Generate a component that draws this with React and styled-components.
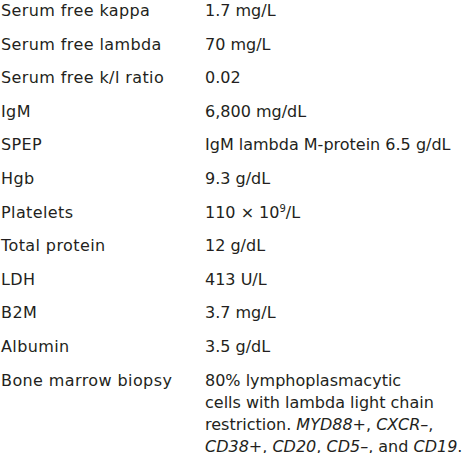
import React from "react";
import styled, { createGlobalStyle } from "styled-components";

const GlobalStyle = createGlobalStyle`
  html, body {
    margin: 0;
    padding: 0;
    background: #ffffff;
  }
  body {
    font-family: "DejaVu Sans", "Noto Sans", sans-serif;
    color: #231f20;
  }
`;

const Table = styled.table`
  border-collapse: collapse;
  width: 474px;
  font-size: 16px;
  line-height: 22px;
`;

const Cell = styled.td`
  padding: 0 0 11.6px 0;
  vertical-align: top;
  white-space: nowrap;
  width: ${(p) => (p.$label ? "204px" : "auto")};
  padding-left: ${(p) => (p.$label ? "1px" : "0")};
  letter-spacing: ${(p) => (p.$label ? "0.4px" : "0")};
`;

const Sup = styled.sup`
  font-size: 10px;
  line-height: 0;
`;

const rows = [
  ["Serum free kappa", "1.7 mg/L"],
  ["Serum free lambda", "70 mg/L"],
  ["Serum free k/l ratio", "0.02"],
  ["IgM", "6,800 mg/dL"],
  ["SPEP", "IgM lambda M-protein 6.5 g/dL"],
  ["Hgb", "9.3 g/dL"],
  ["Platelets", <>110 × 10<Sup>9</Sup>/L</>],
  ["Total protein", "12 g/dL"],
  ["LDH", "413 U/L"],
  ["B2M", "3.7 mg/L"],
  ["Albumin", "3.5 g/dL"],
  [
    "Bone marrow biopsy",
    <>
      80% lymphoplasmacytic
      <br />
      cells with lambda light chain
      <br />
      restriction. <i>MYD88+</i>, <i>CXCR–</i>,
      <br />
      <i>CD38+</i>, <i>CD20</i>, <i>CD5–</i>, and <i>CD19</i>.
    </>,
  ],
];

export default function App() {
  return (
    <>
      <GlobalStyle />
      <Table>
        <tbody>
          {rows.map(([label, value], i) => (
            <tr key={i}>
              <Cell $label>{label}</Cell>
              <Cell>{value}</Cell>
            </tr>
          ))}
        </tbody>
      </Table>
    </>
  );
}
